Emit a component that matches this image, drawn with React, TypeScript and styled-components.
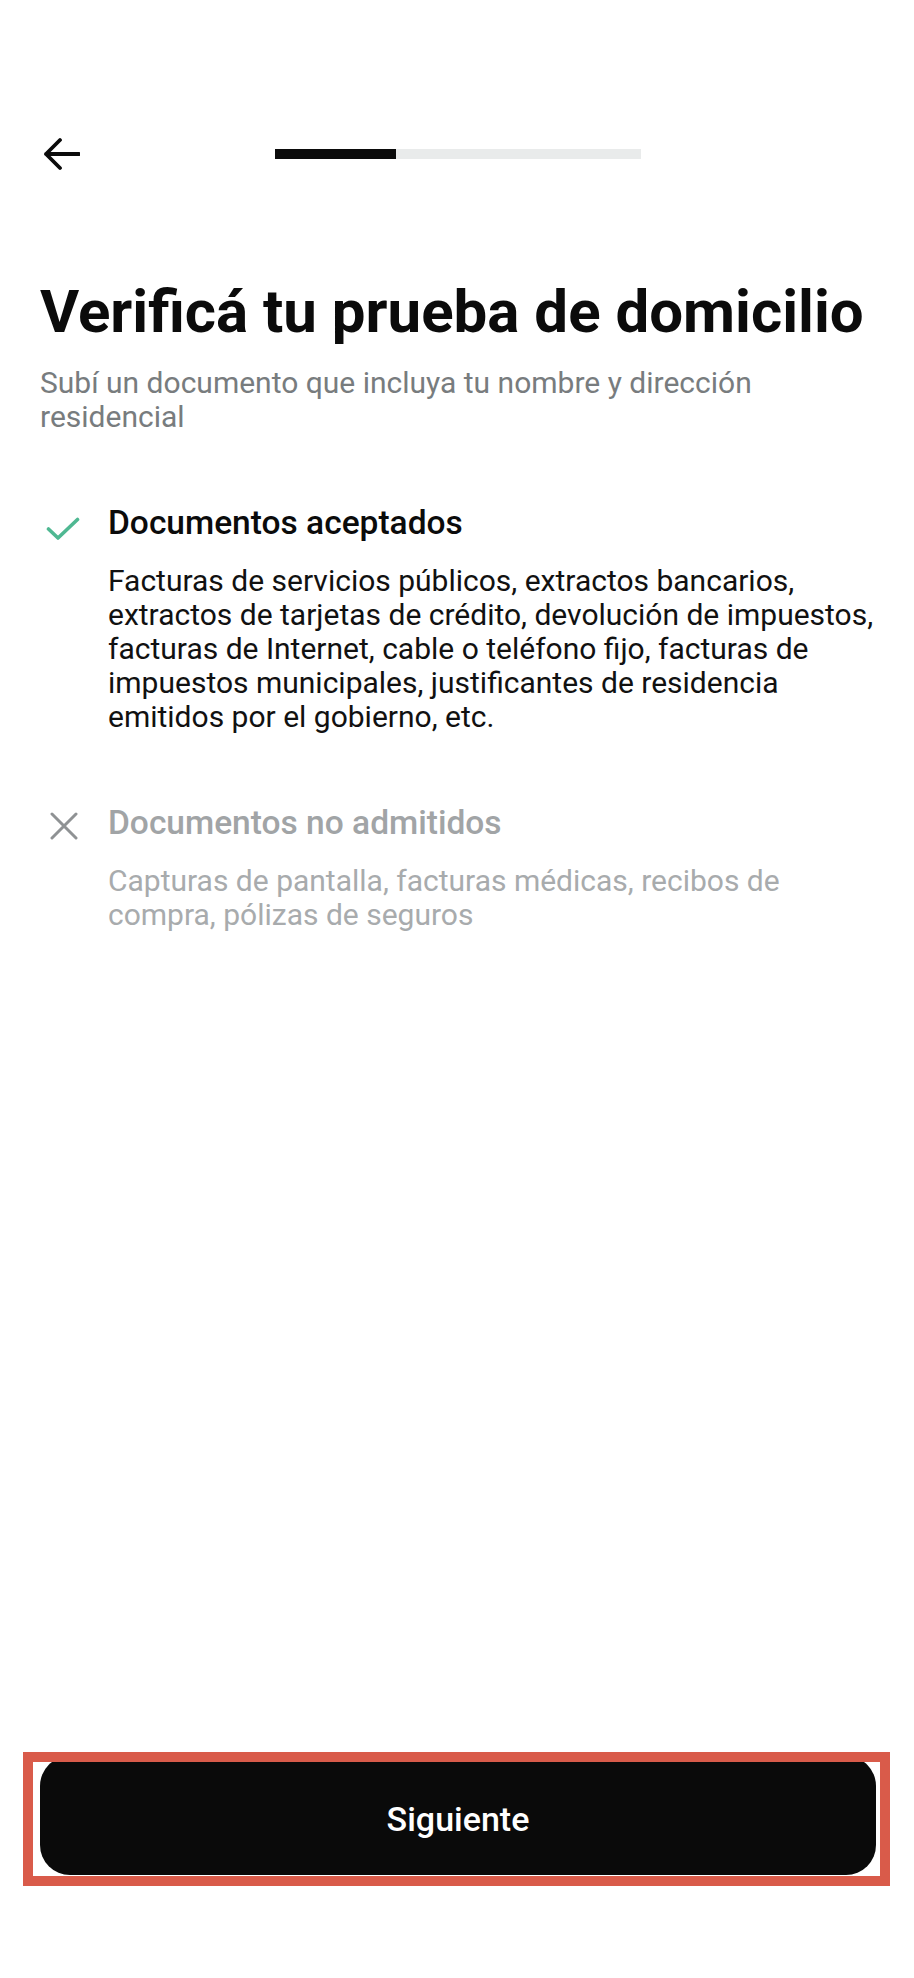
import styled, { createGlobalStyle } from "styled-components";

const GlobalStyle = createGlobalStyle`
  * {
    box-sizing: border-box;
  }

  body {
    margin: 0;
    background: #ffffff;
    font-family: Roboto, "Noto Sans", "Liberation Sans", sans-serif;
    color: #0b0b0b;
  }
`;

type RuleItem = {
  kind: "ok" | "no";
  title: string;
  text: string;
};

const rules: RuleItem[] = [
  {
    kind: "ok",
    title: "Documentos aceptados",
    text: "Facturas de servicios públicos, extractos bancarios, extractos de tarjetas de crédito, devolución de impuestos, facturas de Internet, cable o teléfono fijo, facturas de impuestos municipales, justificantes de residencia emitidos por el gobierno, etc.",
  },
  {
    kind: "no",
    title: "Documentos no admitidos",
    text: "Capturas de pantalla, facturas médicas, recibos de compra, pólizas de seguros",
  },
];

const BackArrow = () => (
  <svg width="38" height="34" viewBox="0 0 38 34" fill="none">
    <path
      d="M37 17H4M18 3L4 17L18 31"
      stroke="#0b0b0b"
      strokeWidth="3.8"
      strokeLinecap="round"
      strokeLinejoin="round"
    />
  </svg>
);

const CheckIcon = () => (
  <svg width="34" height="24" viewBox="0 0 34 24" fill="none">
    <path
      d="M2.5 12L12 21L31.5 2.5"
      stroke="#4fb892"
      strokeWidth="3.6"
      strokeLinecap="round"
      strokeLinejoin="round"
    />
  </svg>
);

const CrossIcon = () => (
  <svg width="28" height="28" viewBox="0 0 28 28" fill="none">
    <path
      d="M2 2L26 26M26 2L2 26"
      stroke="#8f9294"
      strokeWidth="3"
      strokeLinecap="round"
    />
  </svg>
);

const App = () => {
  const progress = 33;

  return (
    <Page>
      <GlobalStyle />
      <TopBar>
        <BackButton aria-label="Volver">
          <BackArrow />
        </BackButton>
        <ProgressTrack>
          <ProgressFill style={{ width: `${progress}%` }} />
        </ProgressTrack>
        <span />
      </TopBar>

      <Title>Verificá tu prueba de domicilio</Title>
      <Subtitle>
        Subí un documento que incluya tu nombre y dirección residencial
      </Subtitle>

      <RuleList>
        {rules.map(rule => (
          <Rule key={rule.title}>
            <RuleIcon kind={rule.kind}>
              {rule.kind === "ok" ? <CheckIcon /> : <CrossIcon />}
            </RuleIcon>
            <div>
              <RuleTitle muted={rule.kind === "no"}>{rule.title}</RuleTitle>
              <RuleText muted={rule.kind === "no"}>{rule.text}</RuleText>
            </div>
          </Rule>
        ))}
      </RuleList>

      <Spacer />

      <Highlight>
        <NextButton>Siguiente</NextButton>
      </Highlight>
    </Page>
  );
};

export default App;

const Page = styled.div`
  height: 1978px;
  display: flex;
  flex-direction: column;
  padding: 130px 38px 92px 40px;
  overflow: hidden;
`;

const TopBar = styled.div`
  height: 48px;
  display: grid;
  grid-template-columns: 1fr 366px 1fr;
  align-items: center;
`;

const BackButton = styled.button`
  width: 40px;
  height: 40px;
  padding: 0;
  margin-left: 2px;
  border: none;
  background: none;
  display: flex;
  align-items: center;
  cursor: pointer;
`;

const ProgressTrack = styled.div`
  height: 10px;
  background: #e9ebeb;
  display: flex;
`;

const ProgressFill = styled.div`
  height: 100%;
  background: #0b0b0b;
`;

const Title = styled.h1`
  margin: 98px 0 0;
  font-size: 60px;
  line-height: 72px;
  font-weight: 700;
  color: #0b0b0b;
  white-space: nowrap;
`;

const Subtitle = styled.p`
  margin: 18px 0 0;
  font-size: 30px;
  line-height: 34px;
  font-weight: 400;
  color: #787c7e;
`;

const RuleList = styled.div`
  margin-top: 69px;
  display: flex;
  flex-direction: column;
  gap: 69px;
`;

const Rule = styled.div`
  display: grid;
  grid-template-columns: 68px 1fr;
`;

const RuleIcon = styled.div<{ kind: "ok" | "no" }>`
  height: 40px;
  display: flex;
  align-items: flex-start;
  padding-left: ${props => (props.kind === "ok" ? "6px" : "10px")};
  padding-top: ${props => (props.kind === "ok" ? "14px" : "9px")};
`;

const RuleTitle = styled.h2<{ muted: boolean }>`
  margin: 0;
  font-size: 33.5px;
  line-height: 40px;
  font-weight: 500;
  color: ${props => (props.muted ? "#a1a4a6" : "#0b0b0b")};
`;

const RuleText = styled.p<{ muted: boolean }>`
  margin: 21px 0 0;
  font-size: 30px;
  line-height: 34px;
  font-weight: 400;
  color: ${props => (props.muted ? "#a8abad" : "#111111")};
`;

const Spacer = styled.div`
  flex: 1;
`;

const Highlight = styled.div`
  margin: 0 -14px 0 -17px;
  border: 10px solid #d95b4a;
  padding: 0 4px 1px 7px;
  overflow: hidden;
`;

const NextButton = styled.button`
  width: 100%;
  height: 119px;
  margin-top: -6px;
  border: none;
  border-radius: 30px;
  background: #0a0a0a;
  color: #ffffff;
  font-family: Roboto, "Noto Sans", "Liberation Sans", sans-serif;
  font-size: 34px;
  font-weight: 500;
  display: flex;
  align-items: center;
  justify-content: center;
  padding: 6px 0 0;
  cursor: pointer;
`;
